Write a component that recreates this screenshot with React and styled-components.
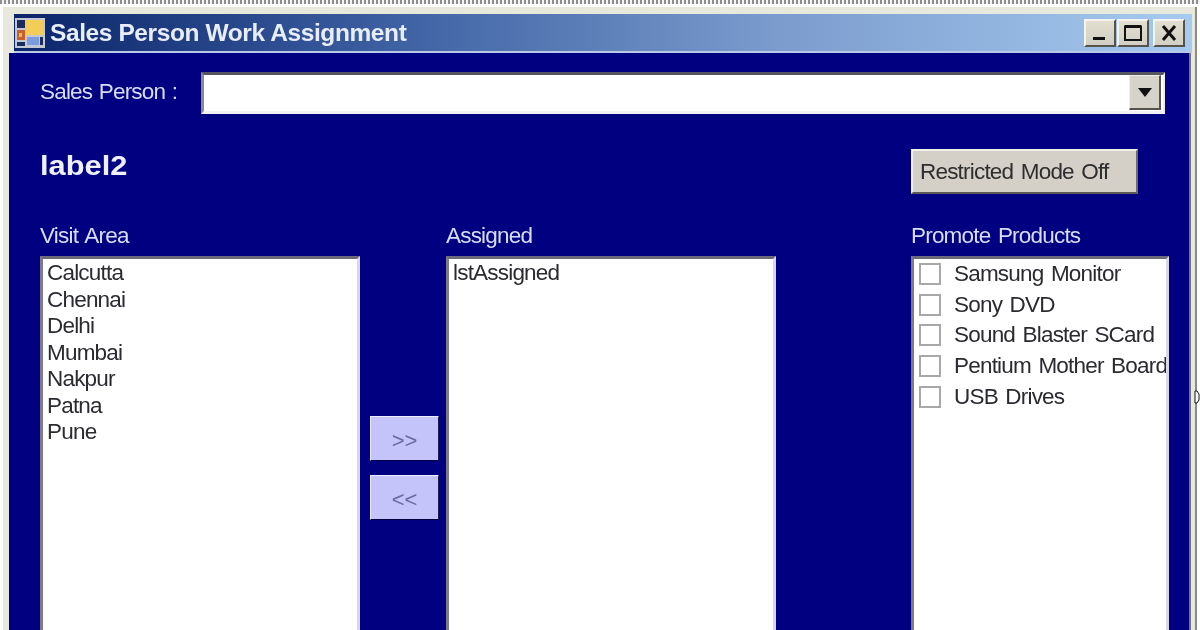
import React from 'react'
import styled, { createGlobalStyle } from 'styled-components'

const GlobalStyle = createGlobalStyle`
  html, body {
    margin: 0;
    padding: 0;
    width: 1200px;
    height: 630px;
    overflow: hidden;
    background: #fff;
  }
`

const Page = styled.div`
  width: 1200px;
  height: 630px;
  overflow: hidden;
  position: relative;
  display: flex;
  flex-direction: column;
  background: #fff;
  font-family: "Liberation Sans", Arial, sans-serif;
  filter: blur(0.6px);
`

const DottedEdge = styled.div`
  height: 4px;
  flex: none;
  background: repeating-linear-gradient(90deg, #8f8f8f 0 2px, #f4f4f4 2px 4px);
`

const WindowFrame = styled.div`
  flex: 1;
  min-height: 0;
  margin: 3px 3px 0 3px;
  padding: 7px 3px 0 6px;
  background: #e9e8dc;
  border-right: 2px solid #8a8a86;
  display: flex;
  flex-direction: column;
`

const TitleBar = styled.div`
  height: 37px;
  flex: none;
  margin-left: 5px;
  padding: 0 7px 0 1px;
  display: flex;
  align-items: center;
  gap: 5px;
  background: linear-gradient(90deg, #0a246a 0%, #3f62a4 33%, #7b9ccd 65%, #a6caf0 100%);
  border-bottom: 2px solid #b9c8e8;
`

const TitleText = styled.span`
  flex: 1;
  color: #e8edfa;
  font-size: 24.5px;
  letter-spacing: -0.4px;
  font-weight: 700;
  white-space: nowrap;
`

const WindowButtons = styled.div`
  display: flex;
`

const WindowButton = styled.div`
  width: 32px;
  height: 28px;
  box-sizing: border-box;
  display: flex;
  align-items: center;
  justify-content: center;
  background: linear-gradient(180deg, #e2dfd0, #d2cfc4);
  border: 2px solid;
  border-color: #f4f3ec #55534c #55534c #f4f3ec;
  margin-left: ${props => props.$gap || 0}px;
`

const Client = styled.div`
  flex: 1;
  min-height: 0;
  margin-right: 1px;
  border-right: 2px solid #74747c;
  background: #000080;
  padding: 19px 24px 0 31px;
  overflow: hidden;
`

const PersonRow = styled.div`
  display: flex;
  align-items: center;
  height: 42px;
`

const FieldLabel = styled.span`
  width: 161px;
  flex: none;
  color: #d9dcfa;
  font-size: 22.5px;
  letter-spacing: -0.8px;
  word-spacing: 1px;
  white-space: nowrap;
  margin-top: -2px;
`

const ComboBox = styled.div`
  flex: 1;
  height: 42px;
  box-sizing: border-box;
  padding: 0 2px 1px 0;
  background: #fff;
  border-top: 3px solid #55555f;
  border-left: 3px solid #8a8a94;
  border-right: 2px solid #eceaf0;
  border-bottom: 3px solid #f2f2f6;
  display: flex;
  justify-content: flex-end;
`

const ComboArrow = styled.div`
  width: 32px;
  box-sizing: border-box;
  background: #d6d3ca;
  border-right: 2px solid #55534c;
  border-bottom: 2px solid #55534c;
  border-left: 1px solid #efeee8;
  border-top: 1px solid #efeee8;
  display: flex;
  align-items: center;
  justify-content: center;
`

const ModeRow = styled.div`
  display: flex;
  align-items: center;
  justify-content: space-between;
  height: 45px;
  margin-top: 35px;
  padding-right: 27px;
`

const BoldLabel = styled.span`
  color: #eef0ff;
  font-size: 28px;
  font-weight: 700;
  margin-top: -11px;
  transform: scaleX(1.1);
  transform-origin: left center;
`

const ModeButton = styled.div`
  width: 227px;
  height: 45px;
  box-sizing: border-box;
  padding-left: 7px;
  display: flex;
  align-items: center;
  background: #d4d0c8;
  border: 2px solid;
  border-color: #f2f1ea #6d6b66 #5c5a58 #f2f1ea;
  color: #2e2e30;
  font-size: 22.5px;
  letter-spacing: -0.8px;
  word-spacing: 2px;
  white-space: nowrap;
`

const ListsRow = styled.div`
  display: flex;
  align-items: flex-start;
  margin-top: 29px;
`

const ListColumn = styled.div`
  width: ${props => props.$width}px;
  margin-right: ${props => props.$after || 0}px;
  flex: none;
`

const ColumnLabel = styled.div`
  color: #d9dcfa;
  font-size: 22.5px;
  letter-spacing: -0.8px;
  word-spacing: 2px;
  line-height: 26px;
  height: 33px;
  white-space: nowrap;
`

const ListBox = styled.div`
  height: 400px;
  box-sizing: border-box;
  background: #fff;
  border-top: 3px solid #6a6a78;
  border-left: 3px solid #7c7c88;
  border-right: 3px solid #d8d8e8;
  padding: 1px 0 0 4px;
  overflow: hidden;
`

const ListItem = styled.div`
  color: #2a2a30;
  font-size: 22.5px;
  letter-spacing: -0.8px;
  line-height: 26.5px;
  white-space: nowrap;
`

const MoveButtons = styled.div`
  width: 69px;
  flex: none;
  margin: 193px 7px 0 10px;
  display: flex;
  flex-direction: column;
  gap: 14px;
`

const MoveButton = styled.div`
  height: 45px;
  box-sizing: border-box;
  padding-top: 4px;
  display: flex;
  align-items: center;
  justify-content: center;
  background: #c4c4fb;
  border: 1px solid;
  border-color: #ecebff #1c1c58 #00003c #ecebff;
  color: #6a6aa0;
  font-size: 22px;
`

const CheckRow = styled.div`
  height: 30.6px;
  display: flex;
  align-items: center;
  gap: 13px;
  color: #2a2a30;
  font-size: 22.5px;
  letter-spacing: -0.8px;
  word-spacing: 2px;
  white-space: nowrap;
`

const CheckSquare = styled.span`
  width: 22px;
  height: 22px;
  flex: none;
  box-sizing: border-box;
  border: 2px solid #a8a8a8;
  background: #fff;
`

const CheckList = styled(ListBox)`
  padding: 0 0 0 5px;
`

const ResizeCursor = styled.svg`
  position: absolute;
  left: 1194px;
  top: 390px;
`

const AppIcon = () => (
  <svg width="30" height="30" viewBox="0 0 30 30">
    <rect width="30" height="30" fill="#c4c8d4" />
    <rect x="2" y="2" width="8" height="8" fill="#1c2c5c" />
    <rect x="11" y="2" width="17" height="15" fill="#f4cc58" />
    <rect x="2" y="12" width="8" height="10" fill="#c8602c" />
    <rect x="4" y="15" width="3" height="4" fill="#f2b060" />
    <rect x="12" y="19" width="12" height="8" fill="#7c9ce0" />
    <rect x="25" y="19" width="3" height="8" fill="#1c2c5c" />
    <rect x="2" y="24" width="8" height="4" fill="#1c2c5c" />
  </svg>
)

const areas = ['Calcutta', 'Chennai', 'Delhi', 'Mumbai', 'Nakpur', 'Patna', 'Pune']
const products = ['Samsung Monitor', 'Sony DVD', 'Sound Blaster SCard', 'Pentium Mother Board', 'USB Drives']

export default function App() {
  return (
    <Page>
      <GlobalStyle />
      <DottedEdge />
      <WindowFrame>
        <TitleBar>
          <AppIcon />
          <TitleText>Sales Person Work Assignment</TitleText>
          <WindowButtons>
            <WindowButton>
              <svg width="20" height="18" viewBox="0 0 20 18"><rect x="3" y="13" width="12" height="3" fill="#111" /></svg>
            </WindowButton>
            <WindowButton $gap={1}>
              <svg width="20" height="18" viewBox="0 0 20 18"><path d="M2 2.5H18V16H2Z" fill="none" stroke="#111" strokeWidth="2" /><rect x="2" y="1" width="16" height="3" fill="#111" /></svg>
            </WindowButton>
            <WindowButton $gap={4}>
              <svg width="20" height="18" viewBox="0 0 20 18"><path d="M4 2L16 16M16 2L4 16" stroke="#111" strokeWidth="3" /></svg>
            </WindowButton>
          </WindowButtons>
        </TitleBar>
        <Client>
          <PersonRow>
            <FieldLabel>Sales Person :</FieldLabel>
            <ComboBox>
              <ComboArrow>
                <svg width="16" height="9" viewBox="0 0 16 9"><path d="M1 0H15L8 9Z" fill="#111" /></svg>
              </ComboArrow>
            </ComboBox>
          </PersonRow>
          <ModeRow>
            <BoldLabel>label2</BoldLabel>
            <ModeButton>Restricted Mode Off</ModeButton>
          </ModeRow>
          <ListsRow>
            <ListColumn $width={320}>
              <ColumnLabel>Visit Area</ColumnLabel>
              <ListBox>
                {areas.map(area => <ListItem key={area}>{area}</ListItem>)}
              </ListBox>
            </ListColumn>
            <MoveButtons>
              <MoveButton>&gt;&gt;</MoveButton>
              <MoveButton>&lt;&lt;</MoveButton>
            </MoveButtons>
            <ListColumn $width={330} $after={135}>
              <ColumnLabel>Assigned</ColumnLabel>
              <ListBox>
                <ListItem>lstAssigned</ListItem>
              </ListBox>
            </ListColumn>
            <ListColumn $width={258}>
              <ColumnLabel>Promote Products</ColumnLabel>
              <CheckList>
                {products.map(product => (
                  <CheckRow key={product}>
                    <CheckSquare />
                    {product}
                  </CheckRow>
                ))}
              </CheckList>
            </ListColumn>
          </ListsRow>
        </Client>
      </WindowFrame>
      <ResizeCursor width="6" height="14" viewBox="0 0 6 14">
        <path d="M1 1H3L5 4V10L3 13H1Z" fill="#fff" stroke="#111" strokeWidth="1" />
      </ResizeCursor>
    </Page>
  )
}
